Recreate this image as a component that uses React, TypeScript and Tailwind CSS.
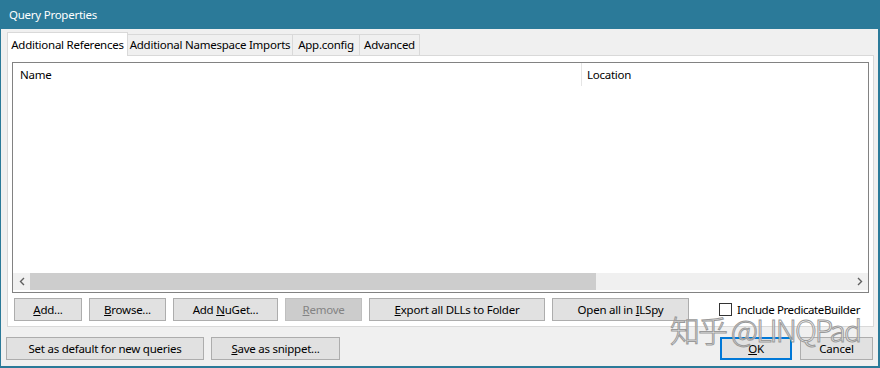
import React from "react";

const U = ({ c }: { c: string }) => <span className="underline">{c}</span>;

function Btn({
  children,
  w,
  disabled,
  primary,
}: {
  children: React.ReactNode;
  w: string;
  disabled?: boolean;
  primary?: boolean;
}) {
  const base = "h-[23px] flex items-center justify-center whitespace-nowrap shrink-0";
  const look = disabled
    ? "bg-[#cccccc] border border-[#bfbfbf] text-[#838383]"
    : primary
    ? "bg-[#e1e1e1] border-2 border-[#0078d7] text-black"
    : "bg-[#e1e1e1] border border-[#adadad] text-black";
  return <div className={`${base} ${look} ${w}`}>{children}</div>;
}

export default function App() {
  return (
    <div className="w-[880px] h-[368px] bg-[#2b7a99] flex flex-col font-['Noto_Sans',sans-serif] text-[11.5px] tracking-[-0.25px] relative overflow-hidden whitespace-nowrap">
      <div className="h-[29px] shrink-0 flex items-center pl-[9px] text-white text-[11.5px]">
        Query Properties
      </div>
      <div className="flex-1 bg-[#f0f0f0] ml-[1px] mr-[2px] mb-[2px] flex flex-col pt-[3px]">
        {/* tabs */}
        <div className="flex items-end pl-[6px] h-[23px] text-black">
          <div className="h-[24px] w-[121px] bg-white border border-b-0 border-[#d9d9d9] flex items-center justify-center relative z-10 -mb-[1px]">
            Additional References
          </div>
          <div className="h-[21px] w-[165px] bg-[#f0f0f0] border border-l-0 border-b-0 border-[#d9d9d9] flex items-center justify-center">
            Additional Namespace Imports
          </div>
          <div className="h-[21px] w-[67px] bg-[#f0f0f0] border border-l-0 border-b-0 border-[#d9d9d9] flex items-center justify-center">
            App.config
          </div>
          <div className="h-[21px] w-[60px] bg-[#f0f0f0] border border-l-0 border-b-0 border-[#d9d9d9] flex items-center justify-center">
            Advanced
          </div>
        </div>
        {/* panel */}
        <div className="ml-[6px] mr-[4px] h-[272px] bg-white border border-[#d9d9d9] flex flex-col px-[4px] pt-[6px]">
          <div className="h-[231px] border border-[#828282] flex flex-col">
            <div className="h-[23px] flex text-black">
              <div className="w-[569px] pl-[7px] flex items-center border-r border-[#e5e5e5]">Name</div>
              <div className="pl-[5px] flex items-center">Location</div>
            </div>
            <div className="flex-1" />
            <div className="h-[17px] bg-[#f0f0f0] flex items-center mb-[2px]">
              <div className="w-[17px] flex justify-center">
                <svg width="6" height="9" viewBox="0 0 6 9"><path d="M5 1 L1.5 4.5 L5 8" stroke="#606060" strokeWidth="1.4" fill="none" /></svg>
              </div>
              <div className="w-[566px] h-[17px] bg-[#cdcdcd]" />
              <div className="flex-1" />
              <div className="w-[17px] flex justify-center">
                <svg width="6" height="9" viewBox="0 0 6 9"><path d="M1 1 L4.5 4.5 L1 8" stroke="#606060" strokeWidth="1.4" fill="none" /></svg>
              </div>
            </div>
          </div>
          <div className="flex items-center mt-[5px] pl-[2px] gap-[7px]">
            <Btn w="w-[68px]"><U c="A" />dd...</Btn>
            <Btn w="w-[77px]"><U c="B" />rowse...</Btn>
            <Btn w="w-[105px]">Add&nbsp;<U c="N" />uGet...</Btn>
            <Btn w="w-[77px]" disabled><U c="R" />emove</Btn>
            <Btn w="w-[176px]"><U c="E" />xport all DLLs to Folder</Btn>
            <Btn w="w-[137px]">Open all in&nbsp;<U c="I" />LSpy</Btn>
            <div className="flex items-center ml-[23px] text-black tracking-[-0.4px]">
              <div className="w-[13px] h-[13px] border border-[#333333] bg-white shrink-0" />
              <span className="ml-[5px]">Include PredicateBuilder</span>
            </div>
          </div>
        </div>
        {/* bottom */}
        <div className="flex items-center mt-[10px] pl-[5px] pr-[5px]">
          <Btn w="w-[198px]">Set as default for new queries</Btn>
          <div className="w-[7px]" />
          <Btn w="w-[129px]"><U c="S" />ave as snippet...</Btn>
          <div className="flex-1" />
          <Btn w="w-[72px]" primary><U c="O" />K</Btn>
          <div className="w-[8px]" />
          <Btn w="w-[73px]">Cancel</Btn>
        </div>
      </div>
      <div className="absolute left-[670px] top-[314px] text-[30px] leading-none tracking-[-2px] font-light text-white/60 [-webkit-text-stroke:1px_#9a9a9a] font-['Noto_Sans_CJK_SC',sans-serif] pointer-events-none whitespace-nowrap">
        知乎 @LINQPad
      </div>
    </div>
  );
}
